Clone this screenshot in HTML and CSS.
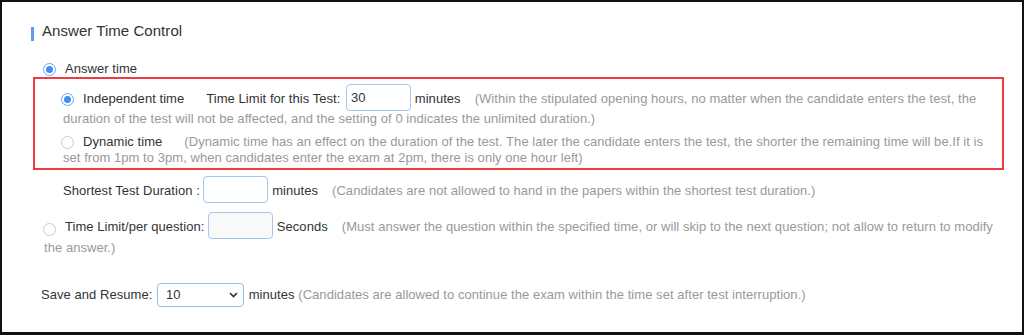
FILE: index.html
```html
<!DOCTYPE html>
<html lang="en">
<head>
<meta charset="utf-8">
<title>Answer Time Control</title>
<link rel="stylesheet" href="styles.css">
</head>
<body>
<div class="frame">
  <div class="main">
    <div class="title-row"><span class="bar"></span><span class="title">Answer Time Control</span></div>
    <div class="row answer"><span class="radio on"></span><span class="label">Answer time</span></div>
    <div class="redbox">
      <p class="para indep"><span class="radio on"></span><span class="label">Independent time</span><span class="label gap">Time Limit for this Test:</span> <input class="inp ml2" type="text" value="30"> <span class="label">minutes</span><span class="desc">(Within the stipulated opening hours, no matter when the candidate enters the test, the duration of the test will not be affected, and the setting of 0 indicates the unlimited duration.)</span></p>
      <p class="para dyn"><span class="radio"></span><span class="label">Dynamic time</span><span class="desc dgap">(Dynamic time has an effect on the duration of the test. The later the candidate enters the test, the shorter the remaining time will be.If it is set from 1pm to 3pm, when candidates enter the exam at 2pm, there is only one hour left)</span></p>
    </div>
    <p class="row shortest"><span class="label">Shortest Test Duration :</span> <input class="inp" type="text" value=""> <span class="label">minutes</span><span class="desc">(Candidates are not allowed to hand in the papers within the shortest test duration.)</span></p>
    <p class="para per"><span class="radio low"></span><span class="label">Time Limit/per question:</span> <input class="inp gray" type="text" value=""> <span class="label">Seconds</span><span class="desc">(Must answer the question within the specified time, or will skip to the next question; not allow to return to modify the answer.)</span></p>
    <p class="row save"><span class="label">Save and Resume:</span> <span class="sel"><span class="sel-val">10</span><svg class="chev" width="9" height="6" viewBox="0 0 9 6"><path d="M1 1 L4.5 4.5 L8 1" fill="none" stroke="#333" stroke-width="1.6"/></svg></span> <span class="label">minutes</span> <span class="desc nomargin">(Candidates are allowed to continue the exam within the time set after test interruption.)</span></p>
  </div>
</div>
</body>
</html>
```

FILE: styles.css
```css
* { box-sizing: border-box; }
html, body { margin: 0; padding: 0; background: #fff; }
body {
  font-family: "Liberation Sans", Arial, sans-serif;
  font-size: 13px;
  letter-spacing: 0.05px;
  color: #333;
}
.frame {
  width: 1024px;
  height: 335px;
  border-style: solid;
  border-color: #111;
  border-width: 2px 2px 3px 2px;
  overflow: hidden;
}
.main {
  padding: 19px 19px 0 40px;
}
.title-row {
  display: flex;
  align-items: flex-start;
  height: 20px;
}
.bar {
  width: 3px;
  height: 14px;
  margin: 6px 8px 0 -11px;
  background: #5c9ded;
}
.title {
  font-size: 15px;
  line-height: 20px;
  color: #333;
}
p { margin: 0; }
.row, .para { line-height: 16px; }
.answer { margin-top: 20px; }
.label { color: #333; }
.gap { margin-left: 22px; }
.desc { color: #999; margin-left: 14px; }
.desc.dgap { margin-left: 22px; }
.desc.nomargin { margin-left: 0; }

.radio {
  display: inline-block;
  position: relative;
  width: 13px;
  height: 13px;
  border: 1px solid #cacaca;
  border-radius: 50%;
  background: #fff;
  vertical-align: -3px;
  margin-right: 9px;
}
.radio.on { border-color: #6aa6f5; }
.radio.on::after {
  content: "";
  position: absolute;
  left: 2px;
  top: 2px;
  width: 7px;
  height: 7px;
  border-radius: 50%;
  background: #3f8ef5;
}
.radio.low { vertical-align: -5px; }
.answer .radio { margin-left: 1px; }

.redbox {
  margin: 0 -1px 0 -9px;
  border: 2px solid #ee3b40;
  padding: 5px 0 2px 0;
}
.redbox .para { padding-left: 28px; padding-right: 6px; }
.redbox .radio { margin-left: -2px; }
.dyn { margin-top: 7px; }

.inp {
  width: 65px;
  height: 27px;
  border: 1px solid #a4c6ef;
  border-radius: 4px;
  padding: 0 4px;
  font-family: "Liberation Sans", Arial, sans-serif;
  font-size: 13px;
  line-height: 16px;
  color: #333;
  background: #fff;
  vertical-align: 1px;
  outline: none;
  margin: 0;
}
.inp.gray { background: #f9f9f9; }
.ml2 { margin-left: 2px; }

.shortest { margin-top: 6px; padding-left: 21px; }
.per { margin-top: 9px; padding-left: 2px; line-height: 18px; }
.per .radio { margin-left: -1px; }

.save { margin-top: 26px; margin-left: -1px; }
.sel {
  display: inline-flex;
  align-items: center;
  justify-content: space-between;
  width: 87px;
  height: 24px;
  border: 1px solid #94bdf0;
  border-radius: 4px;
  padding: 0 5px 0 8px;
  margin-left: 1px;
  margin-right: 1px;
  background: #fff;
  vertical-align: baseline;
}
.sel-val { line-height: 16px; color: #333; }
.chev { display: block; }
```
